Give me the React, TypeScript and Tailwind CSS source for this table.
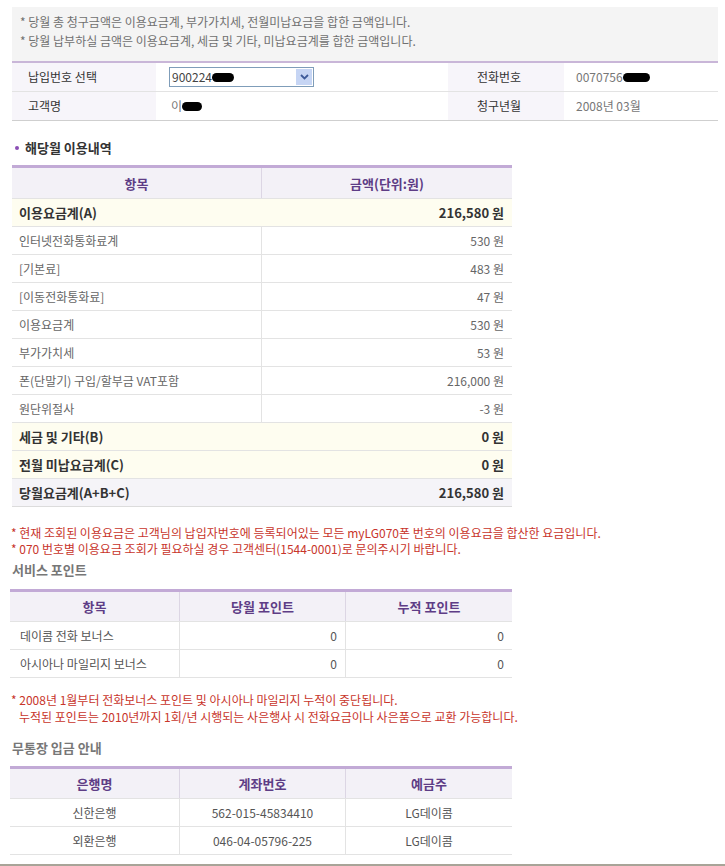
const font = {
  fontFamily: '"Noto Sans CJK KR", "Noto Sans", sans-serif',
};

type Row = { label: string; value: string; kind: "bold" | "normal" | "total" };

const usageRows: Row[] = [
  { label: "이용요금계(A)", value: "216,580 원", kind: "bold" },
  { label: "인터넷전화통화료계", value: "530 원", kind: "normal" },
  { label: "[기본료]", value: "483 원", kind: "normal" },
  { label: "[이동전화통화료]", value: "47 원", kind: "normal" },
  { label: "이용요금계", value: "530 원", kind: "normal" },
  { label: "부가가치세", value: "53 원", kind: "normal" },
  { label: "폰(단말기) 구입/할부금 VAT포함", value: "216,000 원", kind: "normal" },
  { label: "원단위절사", value: "-3 원", kind: "normal" },
  { label: "세금 및 기타(B)", value: "0 원", kind: "bold" },
  { label: "전월 미납요금계(C)", value: "0 원", kind: "bold" },
  { label: "당월요금계(A+B+C)", value: "216,580 원", kind: "total" },
];

function Blot({ w }: { w: number }) {
  return (
    <span
      className="inline-block h-[9px] rounded-full bg-black align-middle"
      style={{ width: w }}
    />
  );
}

function ThreeColTable({
  head,
  rows,
  align,
}: {
  head: string[];
  rows: string[][];
  align: "center" | "right";
}) {
  return (
    <div className="ml-[10px] w-[502px] border-t-[3px] border-[#c2aad6]">
      <div className="grid h-[29px] grid-cols-[170px_166px_166px] bg-[#f3f1f7] text-[13px] font-bold text-[#5e3d86]">
        {head.map((h, i) => (
          <div
            key={h}
            className={`flex items-center justify-center ${i < 2 ? "border-r border-[#dcd6e4]" : ""}`}
          >
            {h}
          </div>
        ))}
      </div>
      {rows.map((r) => (
        <div
          key={r[0]}
          className="grid h-[28px] grid-cols-[170px_166px_166px] border-t border-[#e3e3e3] text-[12px] text-[#555]"
        >
          {r.map((c, i) => (
            <div
              key={i}
              className={`flex items-center ${i < 2 ? "border-r border-[#e3e3e3]" : ""} ${
                align === "center"
                  ? "justify-center"
                  : i === 0
                  ? "pl-[10px]"
                  : "justify-end pr-[8px]"
              }`}
            >
              {c}
            </div>
          ))}
        </div>
      ))}
      <div className="border-t border-[#e3e3e3]" />
    </div>
  );
}

export default function App() {
  return (
    <div
      className="relative h-[866px] w-[725px] overflow-hidden bg-white pt-[7px] text-[12px] leading-none"
      style={font}
    >
      {/* notice box */}
      <div className="ml-[12px] mr-[7px] flex h-[54px] flex-col gap-[7px] bg-[#f4f4f4] pl-[8px] pt-[9px] text-[#707070]">
        <p>* 당월 총 청구금액은 이용요금계, 부가가치세, 전월미납요금을 합한 금액입니다.</p>
        <p>* 당월 납부하실 금액은 이용요금계, 세금 및 기타, 미납요금계를 합한 금액입니다.</p>
      </div>

      {/* info table */}
      <div className="ml-[12px] mr-[7px] border-b border-[#cfcfcf] border-t-[2px] border-t-[#c9b6d8]">
        <div className="grid h-[29px] grid-cols-[144px_292px_116px_1fr] border-b border-[#e3e3e3]">
          <div className="flex items-center bg-[#f7f5fa] pl-[16px] text-[#333]">납입번호 선택</div>
          <div className="flex items-center pl-[13px]">
            <div className="flex h-[20px] w-[145px] items-center justify-between border border-[#7f9db9] bg-white pl-[2px] pr-[1px] text-[#444]">
              <span className="flex items-center">
                900224
                <Blot w={22} />
              </span>
              <span className="flex h-[16px] w-[16px] items-center justify-center bg-[#c6d5f4]">
                <svg width="9" height="6" viewBox="0 0 9 6">
                  <path d="M1 1 L4.5 4.5 L8 1" stroke="#3d5a99" strokeWidth="1.8" fill="none" />
                </svg>
              </span>
            </div>
          </div>
          <div className="flex items-center bg-[#f7f5fa] pl-[29px] text-[#333]">전화번호</div>
          <div className="flex items-center pl-[12px] text-[#777]">
            0070756
            <Blot w={27} />
          </div>
        </div>
        <div className="grid h-[28px] grid-cols-[144px_292px_116px_1fr]">
          <div className="flex items-center bg-[#f7f5fa] pl-[16px] text-[#333]">고객명</div>
          <div className="flex items-center pl-[15px] text-[#777]">
            이
            <Blot w={20} />
          </div>
          <div className="flex items-center bg-[#f7f5fa] pl-[29px] text-[#333]">청구년월</div>
          <div className="flex items-center pl-[12px] text-[#777]">2008년 03월</div>
        </div>
      </div>

      {/* usage heading */}
      <div className="mt-[20px] flex items-center pl-[15px] text-[13px] font-bold text-[#333]">
        <span className="mr-[6px] inline-block h-[4px] w-[4px] rounded-full bg-[#8b4fb5]" />
        해당월 이용내역
      </div>

      {/* usage table */}
      <div className="ml-[12px] mt-[11px] w-[500px] border-t-[3px] border-[#c2aad6]">
        <div className="grid h-[30px] grid-cols-[250px_250px] bg-[#f3f1f7] text-[13px] font-bold text-[#5e3d86]">
          <div className="flex items-center justify-center border-r border-[#dcd6e4]">항목</div>
          <div className="flex items-center justify-center">금액(단위:원)</div>
        </div>
        {usageRows.map((r) => (
          <div
            key={r.label}
            className={`grid h-[28px] grid-cols-[250px_250px] border-t border-[#e3e3e3] ${
              r.kind === "bold"
                ? "bg-[#fefdf0] text-[13px] font-bold text-[#333]"
                : r.kind === "total"
                ? "bg-[#f5f4f8] text-[13px] font-bold text-[#333]"
                : "text-[12px] text-[#666]"
            }`}
          >
            <div
              className={`flex items-center pl-[7px] ${r.kind === "normal" ? "border-r border-[#e3e3e3]" : ""}`}
            >
              {r.label}
            </div>
            <div className="flex items-center justify-end pr-[8px]">{r.value}</div>
          </div>
        ))}
        <div className="border-t border-[#dcdcdc]" />
      </div>

      {/* red notes */}
      <div className="ml-[11px] mt-[20px] flex flex-col gap-[4px] text-[#c8352b]">
        <p>* 현재 조회된 이용요금은 고객님의 납입자번호에 등록되어있는 모든 myLG070폰 번호의 이용요금을 합산한 요금입니다.</p>
        <p>* 070 번호별 이용요금 조회가 필요하실 경우 고객센터(1544-0001)로 문의주시기 바랍니다.</p>
      </div>

      <div className="ml-[12px] mt-[8px] text-[13px] font-bold text-[#777]">서비스 포인트</div>

      <div className="mt-[13px]">
        <ThreeColTable
          head={["항목", "당월 포인트", "누적 포인트"]}
          rows={[
            ["데이콤 전화 보너스", "0", "0"],
            ["아시아나 마일리지 보너스", "0", "0"],
          ]}
          align="right"
        />
      </div>

      <div className="ml-[11px] mt-[16px] flex flex-col gap-[5px] text-[#c8352b]">
        <p>* 2008년 1월부터 전화보너스 포인트 및 아시아나 마일리지 누적이 중단됩니다.</p>
        <p className="pl-[8px]">누적된 포인트는 2010년까지 1회/년 시행되는 사은행사 시 전화요금이나 사은품으로 교환 가능합니다.</p>
      </div>

      <div className="ml-[12px] mt-[18px] text-[13px] font-bold text-[#777]">무통장 입금 안내</div>

      <div className="mt-[12px]">
        <ThreeColTable
          head={["은행명", "계좌번호", "예금주"]}
          rows={[
            ["신한은행", "562-015-45834410", "LG데이콤"],
            ["외환은행", "046-04-05796-225", "LG데이콤"],
          ]}
          align="center"
        />
      </div>

      <div className="absolute bottom-0 left-0 h-[2px] w-full bg-[#a8a498]" />
    </div>
  );
}
